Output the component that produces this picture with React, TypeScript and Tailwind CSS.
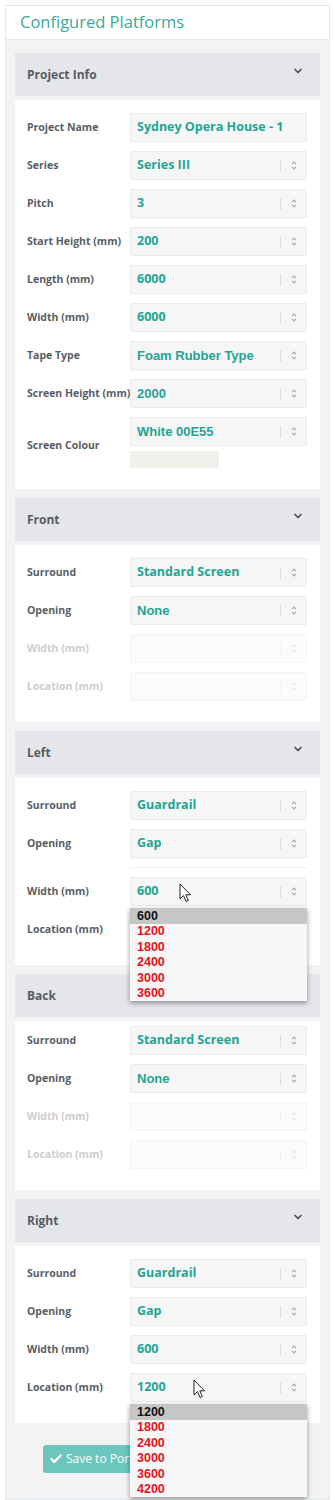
import { ChevronDown, Check } from 'lucide-react'

type Field = {
  label: string
  value?: string
  arial?: boolean
  disabled?: boolean
  options?: string[]
  cursorX?: number
  spacer?: boolean
  text?: boolean
}

const labelFont = { fontFamily: '"Open Sans", "Liberation Sans", sans-serif' }

function Arrows({ faded }: { faded?: boolean }) {
  return (
    <svg width="6" height="9" viewBox="0 0 6 9" fill="none">
      <path d="M1 3.2 L3 1.2 L5 3.2" stroke={faded ? '#e6e6e6' : '#a9a9a9'} strokeWidth="1.2" />
      <path d="M1 5.8 L3 7.8 L5 5.8" stroke={faded ? '#e6e6e6' : '#a9a9a9'} strokeWidth="1.2" />
    </svg>
  )
}

function Cursor() {
  return (
    <svg width="13" height="20" viewBox="0 0 13 20">
      <path
        d="M1 1 L1 16 L4.5 12.5 L7 18.5 L9.3 17.5 L6.8 11.8 L11.5 11.8 Z"
        fill="#fff"
        stroke="#222"
        strokeWidth="1"
        strokeLinejoin="round"
      />
    </svg>
  )
}

function Select({ f, grow = true }: { f: Field; grow?: boolean }) {
  return (
    <div
      className={`relative ${grow ? 'flex-1' : 'shrink-0'} min-w-0 h-[29px] flex items-center rounded-[2px] border pl-[6px] ${
        f.disabled ? 'bg-[#fbfbfb] border-[#f4f4f4]' : 'bg-[#f6f6f6] border-[#ebebeb]'
      }`}
    >
      {f.value && (
        <span
          className={`font-bold text-[#1fa594] leading-none whitespace-nowrap ${
            f.arial ? 'text-[13px]' : 'text-[12.5px]'
          }`}
          style={{
            fontFamily: f.arial
              ? '"Liberation Sans", Arial, sans-serif'
              : '"Open Sans", "Liberation Sans", sans-serif',
          }}
        >
          {f.value}
        </span>
      )}
      {!f.text && (
        <div
          className={`ml-auto h-[12px] w-[26px] shrink-0 border-l flex items-center justify-center ${
            f.disabled ? 'border-[#f2f2f2]' : 'border-[#dedede]'
          }`}
        >
          <Arrows faded={f.disabled} />
        </div>
      )}
      {f.cursorX !== undefined && (
        <div className="absolute top-[5px] z-20" style={{ left: f.cursorX }}>
          <Cursor />
        </div>
      )}
      {f.options && (
        <div className="absolute left-[-1px] right-[-1px] top-[calc(100%+3px)] z-10 bg-[#f7f7f7] shadow-[0_2px_5px_rgba(0,0,0,0.4)]">
          {f.options.map((o, i) => (
            <div
              key={o}
              className={`flex items-center pl-[7px] text-[12.5px] font-bold leading-none ${
                i === 0 ? 'bg-[#c6c6c6] text-[#111] h-[16px]' : 'text-[#e8101a] h-[15.4px]'
              }`}
              style={{ fontFamily: '"Liberation Sans", Arial, sans-serif' }}
            >
              {o}
            </div>
          ))}
        </div>
      )}
    </div>
  )
}

function Label({ f, extra = '' }: { f: Field; extra?: string }) {
  return (
    <div
      className={`w-[103px] shrink-0 text-[10.5px] font-bold whitespace-nowrap ${extra} ${
        f.disabled ? 'text-[#cdcdcd]' : 'text-[#585d64]'
      }`}
      style={labelFont}
    >
      {f.label}
    </div>
  )
}

function Row({ f }: { f: Field }) {
  return (
    <>
      {f.spacer && <div className="h-px bg-[#f1f1f1] ml-[103px]" />}
      <div className="flex items-center h-[29px]">
        <Label f={f} />
        <Select f={f} />
      </div>
    </>
  )
}

function Section({
  title,
  fields,
  top = 'pt-[13px]',
  children,
}: {
  title: string
  fields: Field[]
  top?: string
  children?: React.ReactNode
}) {
  return (
    <div className="flex flex-col">
      <div className="h-[43px] bg-[#e5e6e9] flex items-center justify-between pl-[12px] pr-[16px]">
        <span className="text-[12px] font-bold text-[#575c63]" style={labelFont}>
          {title}
        </span>
        <ChevronDown className="w-[12px] h-[12px] text-[#4a4e55] -mt-[8px]" strokeWidth={3.5} />
      </div>
      <div className={`mt-[4px] bg-white pl-[12px] pr-[13px] pb-[21px] flex flex-col gap-[9px] ${top}`}>
        {fields.map(f => (
          <Row key={f.label} f={f} />
        ))}
        {children}
      </div>
    </div>
  )
}

const projectInfo: Field[] = [
  { label: 'Project Name', value: 'Sydney Opera House - 1', text: true },
  { label: 'Series', value: 'Series III' },
  { label: 'Pitch', value: '3' },
  { label: 'Start Height (mm)', value: '200' },
  { label: 'Length (mm)', value: '6000' },
  { label: 'Width (mm)', value: '6000' },
  { label: 'Tape Type', value: 'Foam Rubber Type', arial: true },
  { label: 'Screen Height (mm)', value: '2000', arial: true },
]

const closedSide: Field[] = [
  { label: 'Surround', value: 'Standard Screen' },
  { label: 'Opening', value: 'None', arial: true },
  { label: 'Width (mm)', disabled: true },
  { label: 'Location (mm)', disabled: true },
]

const leftSide: Field[] = [
  { label: 'Surround', value: 'Guardrail' },
  { label: 'Opening', value: 'Gap' },
  {
    label: 'Width (mm)',
    value: '600',
    spacer: true,
    cursorX: 48,
    options: ['600', '1200', '1800', '2400', '3000', '3600'],
  },
  { label: 'Location (mm)' },
]

const rightSide: Field[] = [
  { label: 'Surround', value: 'Guardrail' },
  { label: 'Opening', value: 'Gap' },
  { label: 'Width (mm)', value: '600' },
  {
    label: 'Location (mm)',
    value: '1200',
    cursorX: 62,
    options: ['1200', '1800', '2400', '3000', '3600', '4200'],
  },
]

export default function App() {
  return (
    <div className="bg-white pt-[5px] px-[5px] min-h-[1500px]">
      <div className="border border-[#e7eaec] flex flex-col min-h-[1495px]">
        <div className="h-[34px] bg-white flex items-center px-[14px] border-b border-[#e7eaec]">
          <span className="text-[16.5px] text-[#3aa99a]" style={labelFont}>
            Configured Platforms
          </span>
        </div>
        <div className="flex-1 bg-[#f3f3f4] px-[9px] pt-[13px] flex flex-col gap-[9px]">
          <Section title="Project Info" fields={projectInfo}>
            <div className="flex items-center">
              <Label f={{ label: 'Screen Colour' }} extra="mt-[6px]" />
              <div className="flex-1 flex flex-col gap-[5px]">
                <Select grow={false} f={{ label: 'Screen Colour', value: 'White 00E55', arial: true }} />
                <div className="w-[89px] h-[17px] bg-[#f1f1ec]" />
              </div>
            </div>
          </Section>
          <Section title="Front" fields={closedSide} />
          <Section title="Left" fields={leftSide} />
          <Section title="Back" fields={closedSide} top="pt-[5px]" />
          <Section title="Right" fields={rightSide} />
          <div className="pl-[28px] pt-[13px]">
            <button
              className="h-[28px] px-[6px] rounded-[3px] bg-[#6cc6be] text-white text-[12px] flex items-center gap-[3px]"
              style={labelFont}
            >
              <Check className="w-[14px] h-[14px]" strokeWidth={4} />
              Save to Portal
            </button>
          </div>
        </div>
      </div>
    </div>
  )
}
